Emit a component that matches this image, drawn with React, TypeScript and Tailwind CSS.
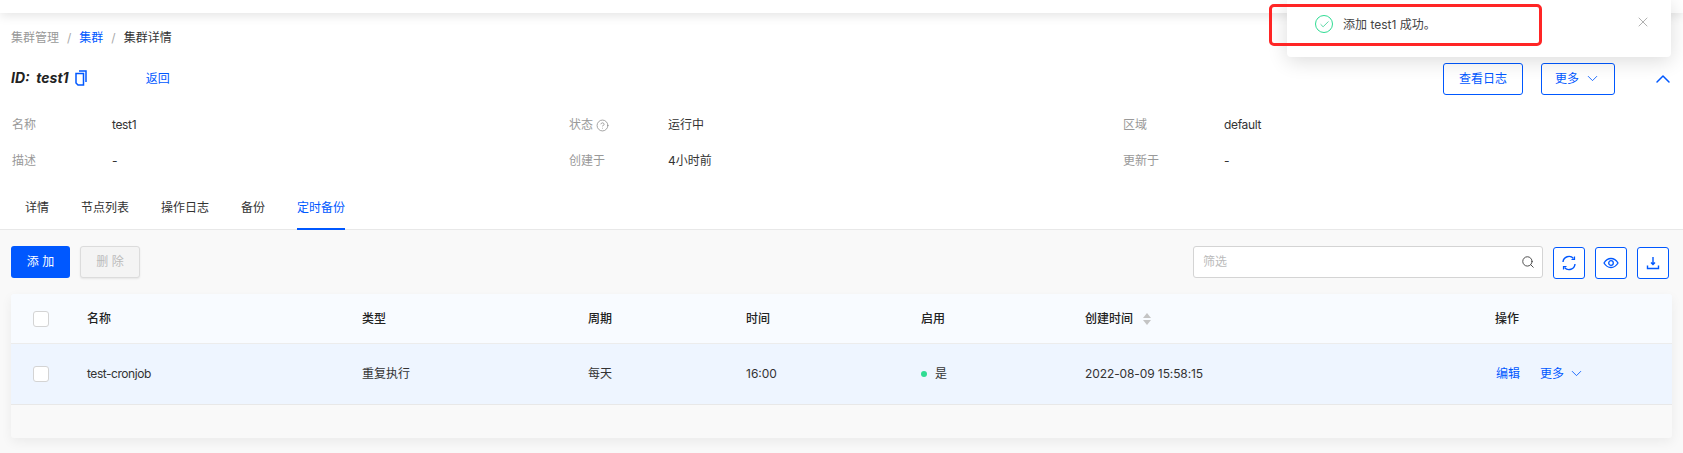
import React from "react";
import { Check, ChevronDown, ChevronUp, Search, X, CircleHelp } from "lucide-react";

function Info({ label, value, help, w, lw, tight }: { label: string; value: string; help?: boolean; w: string; lw: string; tight?: boolean }) {
  return (
    <div className={`flex items-center ${w}`}>
      <div className={`flex items-center gap-[3px] text-[#999] ${lw}`}>
        {label}
        {help && <CircleHelp size={13} strokeWidth={1.4} className="text-[#888]" />}
      </div>
      <div className={tight ? "text-[#333] tracking-[-0.35px]" : "text-[#333]"}>{value}</div>
    </div>
  );
}

const cols = "grid grid-cols-[76px_275px_226px_158px_175px_164px_410px_184px] grid-rows-[1fr] items-center";

function Checkbox() {
  return (
    <div className="pl-[22px]">
      <div className="w-4 h-4 bg-white border border-[#d4d4d4] rounded-[3px]" />
    </div>
  );
}

function IconBtn({ children }: { children: React.ReactNode }) {
  return (
    <button className="w-8 h-8 flex items-center justify-center border border-[#0058ff] rounded-[3px] text-[#0058ff] bg-white">
      {children}
    </button>
  );
}

export default function App() {
  return (
    <div
      className="relative w-[1683px] h-[453px] overflow-hidden bg-white text-[12px] leading-[16px] text-[#333]"
      style={{ fontFamily: "Inter, 'Noto Sans CJK SC', sans-serif" }}
    >
      <div className="h-[13px] bg-white shadow-[0_2px_12px_rgba(0,0,0,0.12)] relative" />

      <div className="pl-[11px] pt-[17px] flex items-center h-[33px] text-[#999]">
        <span>集群管理</span>
        <span className="mx-[8px] text-[#aaa]">/</span>
        <span className="text-[#0058ff]">集群</span>
        <span className="mx-[8px] text-[#aaa]">/</span>
        <span className="text-[#333]">集群详情</span>
      </div>

      <div className="flex items-center h-[32px] mt-[17px] pl-[11px] pr-[8px]">
        <span className="text-[14px] font-bold italic text-[#222] whitespace-pre mb-[2px]">ID:  test1</span>
        <svg width="12" height="16" viewBox="0 0 12 16" fill="none" className="ml-[6px] mb-[3px] text-[#0058ff]" stroke="currentColor" strokeWidth="1.5">
          <path d="M4 1h7v11" />
          <path d="M1 3.500h7.500V15H3L1 13z" fill="white" />
        </svg>
        <span className="ml-[59px] text-[#0058ff]">返回</span>
        <button className="ml-auto w-[80px] h-8 border border-[#0058ff] rounded-[3px] text-[#0058ff] mr-[18px]">查看日志</button>
        <button className="w-[74px] h-8 border border-[#0058ff] rounded-[3px] text-[#0058ff] flex items-center justify-center gap-[5px] mr-[36px]">
          更多 <ChevronDown size={17} strokeWidth={1.2} className="mb-[2px]" />
        </button>
        <ChevronUp size={24} strokeWidth={1.5} className="text-[#0058ff]" />
      </div>

      <div className="pl-[12px] mt-[14px] flex h-[32px]">
        <Info label="名称" value="test1" tight w="w-[557px]" lw="w-[100px]" />
        <Info label="状态" value="运行中" help w="w-[554px]" lw="w-[99px]" />
        <Info label="区域" value="default" tight w="w-[400px]" lw="w-[101px]" />
      </div>
      <div className="pl-[12px] mt-[4px] flex h-[32px]">
        <Info label="描述" value="-" w="w-[557px]" lw="w-[100px]" />
        <Info label="创建于" value="4小时前" w="w-[554px]" lw="w-[99px]" />
        <Info label="更新于" value="-" w="w-[400px]" lw="w-[101px]" />
      </div>

      <div className="flex h-[45px] mt-[8px] pl-[25px] gap-[32px] border-b border-[#e8e8e8] text-[#333]">
        <div className="pt-[15px]">详情</div>
        <div className="pt-[15px]">节点列表</div>
        <div className="pt-[15px]">操作日志</div>
        <div className="pt-[15px]">备份</div>
        <div className="pt-[15px] h-[45px] border-b-2 border-[#0058ff] text-[#0058ff]">定时备份</div>
      </div>

      <div className="bg-[#f9f9f9] h-[223px] px-[11px] pt-[16px] pb-[15px]">
        <div className="flex items-start h-[32px] pr-[3px]">
          <button className="w-[59px] h-8 bg-[#0058ff] text-white rounded-[3px]">添 加</button>
          <button className="ml-[10px] w-[60px] h-8 bg-[#f4f4f4] border border-[#dcdcdc] text-[#bbb] rounded-[3px] shadow-[0_1px_2px_rgba(0,0,0,0.08)]">删 除</button>
          <div className="ml-auto w-[350px] h-[32px] bg-white border border-[#d4d4d4] rounded-[3px] flex items-center justify-between pl-[9px] pr-[7px] text-[#bbb]">
            <span>筛选</span>
            <Search size={14} strokeWidth={1.6} className="text-[#444]" />
          </div>
          <div className="flex gap-[10px] ml-[10px] mt-px">
            <IconBtn>
              <svg width="16" height="16" viewBox="0 0 16 16" fill="none" stroke="currentColor" strokeWidth="1.4">
                <path d="M2 7A6 6 0 0 1 12.500 3.500" />
                <path d="M14 9A6 6 0 0 1 3.500 12.500" />
                <path d="M13.500 1.500v3h-3M2.500 14.500v-3h3" strokeWidth="1.2" />
              </svg>
            </IconBtn>
            <IconBtn>
              <svg width="16" height="16" viewBox="0 0 16 16" fill="none" stroke="currentColor" strokeWidth="1.3">
                <path d="M1 8c1.800-3 4.200-4.500 7-4.500S13.200 5 15 8c-1.800 3-4.200 4.500-7 4.500S2.800 11 1 8z" />
                <circle cx="8" cy="8" r="2.300" />
              </svg>
            </IconBtn>
            <IconBtn>
              <svg width="14" height="14" viewBox="0 0 14 14" fill="none" stroke="currentColor" strokeWidth="1.4">
                <path d="M7 1v7M5 6.500L7 8.500 9 6.500M1.500 9.500V12.500H12.500V9.500" />
              </svg>
            </IconBtn>
          </div>
        </div>

        <div className="mt-[16px] rounded-[3px] shadow-[0_4px_12px_rgba(0,0,0,0.06)] bg-[#f9f9f9] h-[144px]">
          <div className={`${cols} h-[50px] bg-[#f8fbff] border-b border-[#ececec] rounded-t-[3px] text-[#222] font-medium`}>
            <Checkbox />
            <div>名称</div>
            <div>类型</div>
            <div>周期</div>
            <div>时间</div>
            <div>启用</div>
            <div className="flex items-center gap-[9px]">
              创建时间
              <svg width="10" height="14" viewBox="0 0 10 14" fill="#c4c4c4">
                <path d="M5 1l4 5H1zM5 13L1 8h8z" />
              </svg>
            </div>
            <div>操作</div>
            <div />
          </div>
          <div className={`${cols} h-[61px] bg-[#eef5ff] border-b border-[#e8e8e8]`}>
            <Checkbox />
            <div className="tracking-[-0.45px]">test-cronjob</div>
            <div>重复执行</div>
            <div>每天</div>
            <div>16:00</div>
            <div className="flex items-center gap-[8px]">
              <span className="w-[6px] h-[6px] rounded-full bg-[#2fdc93]" />是
            </div>
            <div className="tracking-[-0.1px]">2022-08-09 15:58:15</div>
            <div className="flex items-center text-[#0058ff] pl-px">
              <span>编辑</span>
              <span className="ml-[20px]">更多</span>
              <ChevronDown size={17} strokeWidth={1.2} className="ml-[4px] mb-[2px]" />
            </div>
            <div />
          </div>
        </div>
      </div>

      <div className="absolute left-[1287px] top-0 w-[384px] h-[57px] bg-white rounded-b-[4px] shadow-[0_4px_20px_rgba(0,0,0,0.14)] flex items-start pt-[15px] pl-[28px] pr-[20px]">
        <div className="w-[18px] h-[18px] rounded-full border-[1.5px] border-[#2fdc93] flex items-center justify-center text-[#1fc884]">
          <Check size={11} strokeWidth={1.6} />
        </div>
        <span className="ml-[10px] mt-[2px] text-[#444]">添加 test1 成功。</span>
        <X size={16} strokeWidth={1} className="ml-auto -mt-px text-[#888]" />
      </div>
      <div className="absolute left-[1269px] top-[4px] w-[273px] h-[42px] border-[3px] border-[#ff2525] rounded-[5px]" />
    </div>
  );
}
